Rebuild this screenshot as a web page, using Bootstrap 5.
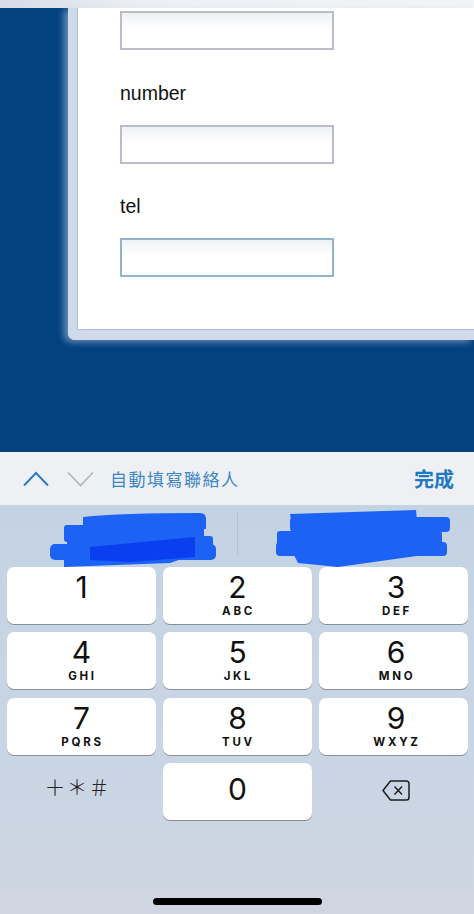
<!DOCTYPE html>
<html lang="zh-Hant">
<head>
<meta charset="utf-8">
<title>Keypad</title>
<link href="https://cdn.jsdelivr.net/npm/bootstrap@5.3.0/dist/css/bootstrap.min.css" rel="stylesheet">
<style>
html,body{margin:0;height:914px;overflow:hidden;background:#03417f}
.shot{width:474px;height:914px;font-family:"Liberation Sans",Arial,sans-serif}
.topbar{height:8px;background:linear-gradient(90deg,#d5dce6,#eef0f3 30%,#f3f4f6)}
.desk{height:444px;background:#03417f;padding-left:68px}
.frame{height:332px;background:#fff;border-left:9px solid #cfdbeb;border-bottom:10px solid #cfdbeb;border-bottom-left-radius:7px;box-shadow:-4px 2px 7px rgba(190,210,235,.55),inset 1px -1px 0 #a9c4dc;padding:3px 0 0 43px}
.field{display:block;width:214px;height:39px;border:2px solid #b8bdc9;border-radius:0;padding:0;background:linear-gradient(#eff1f3,#fff 45%);box-shadow:none}
.field.active-field{border-color:#92b3cc}
.lab{font-size:19.5px;line-height:24px;color:#111;margin:30.5px 0 20px}
.toolbar{height:53px;background:#eff0f4;padding-left:23px;padding-right:20px}
.up-icon{margin-right:18px}
.tool-text{font-family:"Noto Sans CJK TC",sans-serif;font-size:17px;letter-spacing:1.5px;color:#3b86c6;margin-left:16px}
.done{font-family:"Noto Sans CJK TC",sans-serif;font-size:20px;font-weight:700;color:#1f79c3}
.kb{height:409px;background:linear-gradient(#c4d3e3,#c8d5e5 60%,#d0d6e1)}
.sugg{height:62px}
.cell{flex:1 1 0;height:62px}
.sep{width:1px;height:42px;margin-top:8px;background:#b3c1d1}
.pad{display:grid;grid-template-columns:149px 149px 149px;grid-auto-rows:58px;column-gap:7px;row-gap:7.3px;padding-left:7px}
.kkey{background:#fff;border-radius:7px;box-shadow:0 1px 0 #8a8f97;height:57px;padding-top:2px;color:#111;font-family:Inter,"Liberation Sans",sans-serif}
.kkey b{display:block;font-weight:400;font-size:30px;line-height:36px}
.kkey span{display:block;font-weight:700;font-size:11.5px;letter-spacing:2.7px;line-height:13px;margin-top:0;padding-left:2px}
.kkey.right-col{padding-left:5px}
.kkey b.zero{margin-top:6px}
.plain{color:#222;font-family:"Noto Sans CJK TC",sans-serif;font-weight:300;font-size:21px;letter-spacing:1px;line-height:46px;padding-right:8px}
.plain-key{height:58px}
.del-key{padding:17px 0 0 4px}
.home{width:169px;height:7px;background:#000;border-radius:4px;margin:77px 0 0 153px}
svg{display:block}
</style>
</head>
<body>
<div class="shot d-flex flex-column">
  <div class="topbar"></div>
  <div class="desk">
    <div class="frame">
      <input class="form-control field" type="text" aria-label="text">
      <div class="lab">number</div>
      <input class="form-control field" type="text" aria-label="number">
      <div class="lab">tel</div>
      <input class="form-control field active-field" type="text" aria-label="tel">
    </div>
  </div>
  <div class="toolbar d-flex align-items-center">
    <svg class="up-icon" width="26" height="16" viewBox="0 0 26 16"><path d="M1 14.500 13 2l12 12.500" fill="none" stroke="#2c7dc2" stroke-width="2"/></svg>
    <svg width="27" height="16" viewBox="0 0 27 16"><path d="M1 1.500 13.500 14.500 26 1.500" fill="none" stroke="#b5b8bd" stroke-width="1.800"/></svg>
    <span class="tool-text">自動填寫聯絡人</span>
    <span class="done ms-auto">完成</span>
  </div>
  <div class="kb">
    <div class="sugg d-flex">
      <div class="cell">
        <svg width="237" height="62" viewBox="0 0 237 62">
          <g fill="#1c62f4">
            <path d="M83 12Q120 8 200 8Q206 8 206 14V24H83Z"/>
            <rect x="64" y="20" width="140" height="17" rx="3"/>
            <rect x="67" y="31" width="146" height="17" rx="3"/>
            <rect x="50" y="39" width="166" height="16" rx="5"/>
            <path d="M64 46H205L170 58 64 62Z"/>
          </g>
          <path d="M90 42 195 32V52L130 57 90 55Z" fill="#0a3ff0"/>
        </svg>
      </div>
      <div class="sep"></div>
      <div class="cell">
        <svg width="236" height="62" viewBox="0 0 236 62">
          <g fill="#1c62f4">
            <path d="M52 9 178 5 180 26H55Z"/>
            <rect x="52" y="12" width="160" height="15" rx="4"/>
            <rect x="39" y="26" width="165" height="15" rx="3"/>
            <rect x="38" y="37" width="171" height="14" rx="4"/>
            <path d="M55 48H200L100 62 60 58Z"/>
          </g>
        </svg>
      </div>
    </div>
    <div class="pad">
      <div class="kkey text-center"><b>1</b></div>
      <div class="kkey text-center"><b>2</b><span>ABC</span></div>
      <div class="kkey text-center right-col"><b>3</b><span>DEF</span></div>
      <div class="kkey text-center"><b>4</b><span>GHI</span></div>
      <div class="kkey text-center"><b>5</b><span>JKL</span></div>
      <div class="kkey text-center right-col"><b>6</b><span>MNO</span></div>
      <div class="kkey text-center"><b>7</b><span>PQRS</span></div>
      <div class="kkey text-center"><b>8</b><span>TUV</span></div>
      <div class="kkey text-center right-col"><b>9</b><span>WXYZ</span></div>
      <div class="plain-key text-center plain">＋＊＃</div>
      <div class="kkey text-center"><b class="zero">0</b></div>
      <div class="plain-key del-key d-flex justify-content-center">
        <svg width="28" height="21" viewBox="0 0 28 21"><path d="M8.500 1H24.500A2.500 2.500 0 0 1 27 3.500V17.500A2.500 2.500 0 0 1 24.500 20H8.500L1 10.500Z" fill="none" stroke="#1c1c1e" stroke-width="1.500" stroke-linejoin="round"/><path d="M12.500 6.500 20 14.500M20 6.500 12.500 14.500" stroke="#1c1c1e" stroke-width="1.400"/></svg>
      </div>
    </div>
    <div class="home"></div>
  </div>
</div>
<script src="https://cdn.jsdelivr.net/npm/bootstrap@5.3.0/dist/js/bootstrap.bundle.min.js"></script>
</body>
</html>
